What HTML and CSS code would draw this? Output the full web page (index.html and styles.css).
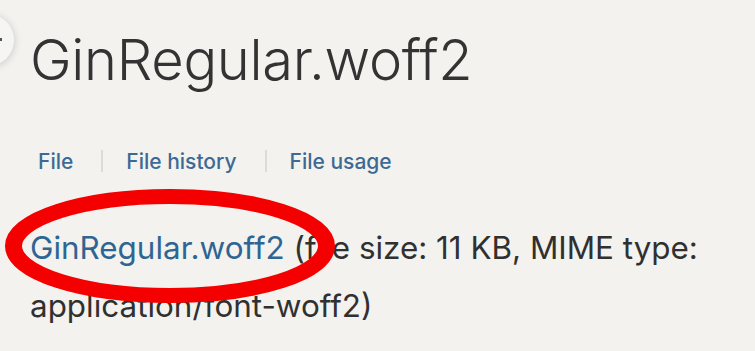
FILE: index.html
```html
<!DOCTYPE html>
<html>
<head>
<meta charset="utf-8">
<link rel="stylesheet" href="styles.css">
</head>
<body>
<div class="page">
  <div class="back-btn"><span class="chev"></span></div>
  <h1 class="title">GinRegular.woff2</h1>
  <nav class="tabs">
    <a class="tab">File</a>
    <span class="sep"></span>
    <a class="tab">File history</a>
    <span class="sep"></span>
    <a class="tab">File usage</a>
  </nav>
  <p class="info"><a class="file-link">GinRegular.woff2</a> (file size: 11 KB, MIME type: application/font-woff2)</p>
  <svg class="circle-mark" width="350" height="130" viewBox="0 0 350 130">
    <ellipse cx="170" cy="58" rx="159" ry="51" fill="none" stroke="#f40000" stroke-width="12"/>
    <ellipse cx="170" cy="58" rx="154" ry="48" fill="none" stroke="#f40000" stroke-width="12"/>
  </svg>
</div>
</body>
</html>
```
FILE: styles.css
```css
html, body {
  margin: 0;
  padding: 0;
  background: #f3f2ee;
}
body {
  width: 755px;
  height: 351px;
  overflow: hidden;
  font-family: Inter, "Noto Sans", sans-serif;
  color: #303030;
}
.page {
  position: relative;
  padding: 22px 0 0 30px;
  height: 351px;
  box-sizing: border-box;
}
.back-btn {
  position: absolute;
  left: -38px;
  top: 14px;
  width: 52px;
  height: 52px;
  border-radius: 50%;
  background: #f5f5f3;
  box-shadow: 0 1px 8px rgba(0,0,0,0.18);
}
.chev {
  position: absolute;
  right: 12px;
  top: 24px;
  width: 3px;
  height: 3px;
  background: #555;
}
.title {
  margin: 0;
  font-weight: 300;
  font-size: 56px;
  line-height: 76px;
  letter-spacing: -0.3px;
  color: #333;
}
.tabs {
  display: flex;
  align-items: center;
  margin-top: 48px;
  margin-left: 8px;
  height: 30px;
}
.tab {
  font-size: 21px;
  font-weight: 500;
  color: #3d6a94;
}
.sep {
  width: 2px;
  height: 22px;
  background: #dcdbd8;
  margin: 0 23px 0 28px;
}
.info {
  margin: 43px 0 0 0;
  font-size: 31.4px;
  line-height: 58px;
  width: 720px;
  color: #303030;
}
.file-link {
  color: #2e6592;
}
.circle-mark {
  position: absolute;
  left: 0;
  top: 188px;
}
```
